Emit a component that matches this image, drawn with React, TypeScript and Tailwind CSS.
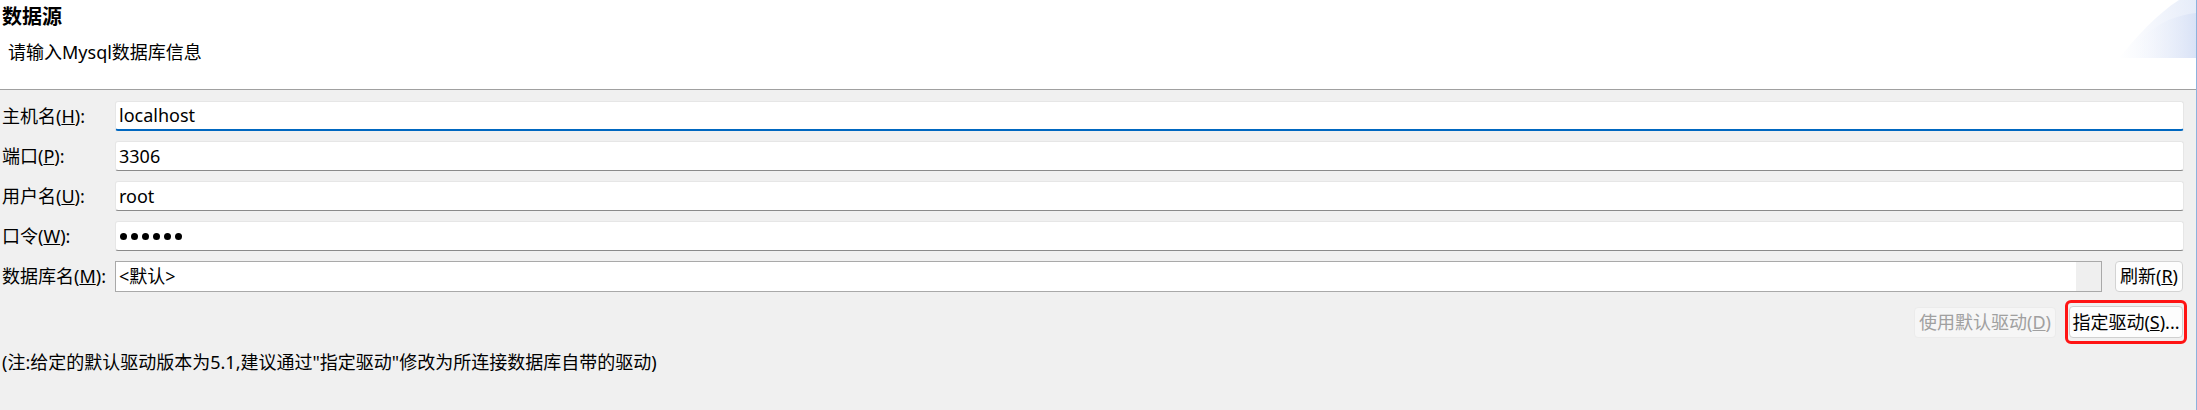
export default function App() {
  const label = "w-[115px] shrink-0 pl-[2px] whitespace-nowrap";
  const input =
    "flex-1 h-[30px] mr-[12px] bg-white border border-[#e6e6e6] border-b-[#8a8a8a] rounded-[3px] px-[3px] flex items-center";

  return (
    <div className="w-[2197px] h-[410px] bg-[#f0f0f0] border-r border-[#8db2dd] flex flex-col font-['Noto_Sans','Noto_Sans_CJK_SC',sans-serif] text-[18px] text-black overflow-hidden">
      {/* header */}
      <div className="relative h-[90px] shrink-0 bg-white border-b border-[#a0a0a0]">
        <div className="h-[34px] leading-[34px] pl-[2px] text-[20px] font-bold">数据源</div>
        <div className="h-[36px] leading-[36px] pl-[8px]">请输入Mysql数据库信息</div>
        <svg className="absolute top-0 right-0" width="77" height="58" viewBox="0 0 77 58">
          <defs>
            <linearGradient id="g1" x1="0" y1="0" x2="1" y2="0">
              <stop offset="0" stopColor="#ffffff" />
              <stop offset="1" stopColor="#e6ecf9" />
            </linearGradient>
            <linearGradient id="g2" x1="0" y1="0" x2="1" y2="0">
              <stop offset="0" stopColor="#ffffff" stopOpacity="0" />
              <stop offset="1" stopColor="#d9e2f6" />
            </linearGradient>
          </defs>
          <path d="M0,58 C18,36 38,14 60,0 L77,0 L77,58 Z" fill="url(#g1)" />
          <path d="M6,58 C20,36 45,16 77,13 L77,58 Z" fill="url(#g2)" />
        </svg>
      </div>

      {/* form */}
      <div className="flex flex-col gap-[10px] pt-[11px]">
        <div className="flex items-center">
          <div className={label}>
            主机名(<span className="underline">H</span>):
          </div>
          <div className={input + " border-b-2 border-b-[#0067c0]"}>localhost</div>
        </div>
        <div className="flex items-center">
          <div className={label}>
            端口(<span className="underline">P</span>):
          </div>
          <div className={input}>3306</div>
        </div>
        <div className="flex items-center">
          <div className={label}>
            用户名(<span className="underline">U</span>):
          </div>
          <div className={input}>root</div>
        </div>
        <div className="flex items-center">
          <div className={label}>
            口令(<span className="underline">W</span>):
          </div>
          <div className={input}>
            <div className="flex gap-[4px] pl-[1px]">
              {[0, 1, 2, 3, 4, 5].map((i) => (
                <span key={i} className="w-[7px] h-[7px] rounded-full bg-black" />
              ))}
            </div>
          </div>
        </div>
        <div className="flex items-center">
          <div className={label}>
            数据库名(<span className="underline">M</span>):
          </div>
          <div className="flex-1 h-[31px] bg-white border border-[#a9a9a9] flex">
            <div className="flex-1 px-[3px] flex items-center">&lt;默认&gt;</div>
            <div className="w-[25px] bg-[#efefef]" />
          </div>
          <button className="ml-[13px] mr-[13px] w-[68px] h-[31px] bg-[#fdfdfd] border border-[#d3d3d3] rounded-[4px] flex items-center justify-center">
            刷新(<span className="underline">R</span>)
          </button>
        </div>
      </div>

      {/* buttons */}
      <div className="flex justify-end items-center mt-[8px] pr-[9px]">
        <button className="w-[142px] h-[31px] bg-[#f6f6f6] border border-[#ebebeb] rounded-[4px] text-[#a0a0a0] flex items-center justify-center">
          使用默认驱动(<span className="underline">D</span>)
        </button>
        <div className="ml-[9px] border-[3px] border-[#ff1414] rounded-[6px] px-[1px] py-[3px]">
          <button className="w-[114px] h-[32px] bg-[#fdfdfd] border border-[#d0d0d0] rounded-[4px] flex items-center justify-center">
            指定驱动(<span className="underline">S</span>)...
          </button>
        </div>
      </div>

      {/* note */}
      <div className="mt-[6px] h-[24px] leading-[24px] pl-[2px]">
        (注:给定的默认驱动版本为5.1,建议通过"指定驱动"修改为所连接数据库自带的驱动)
      </div>
    </div>
  );
}
